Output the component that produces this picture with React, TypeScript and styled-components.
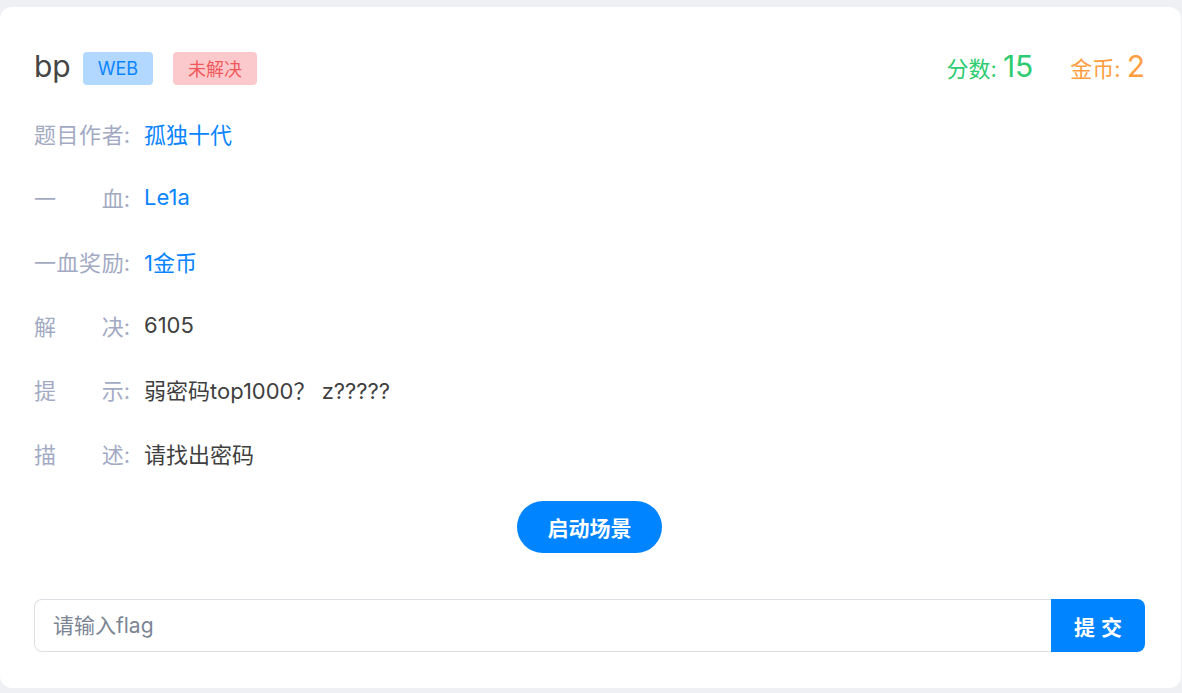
import React from "react";
import styled, { createGlobalStyle } from "styled-components";

const GlobalStyle = createGlobalStyle`
  html, body { margin: 0; padding: 0; background: #eef0f3; }
  body { font-family: Inter, "Noto Sans CJK SC", sans-serif; }
  * { box-sizing: border-box; }
`;

const Page = styled.div`
  padding: 7px 1px 5px 0;
`;

const Card = styled.div`
  background: #ffffff;
  border-radius: 12px;
  padding: 44px 36px 36px 34px;
  display: flex;
  flex-direction: column;
`;

const Header = styled.div`
  display: flex;
  align-items: center;
  height: 34px;
  margin-bottom: 16px;
`;

const Title = styled.span`
  font-size: 30px;
  color: #454545;
  margin-right: 12px;
  line-height: 1;
  margin-top: -4px;
`;

const Badge = styled.span<{ $bg: string; $fg: string }>`
  display: inline-flex;
  align-items: center;
  justify-content: center;
  height: 33px;
  padding: 0 15px;
  border-radius: 4px;
  background: ${(p) => p.$bg};
  color: ${(p) => p.$fg};
  font-size: 18px;
  margin-right: 20px;
`;

const Spacer = styled.div`
  flex: 1;
`;

const Stat = styled.span<{ $color: string }>`
  color: ${(p) => p.$color};
  font-size: 22px;
  display: inline-flex;
  align-items: baseline;
  margin-left: 37px;
  margin-top: -4px;
`;

const StatNum = styled.span`
  font-size: 30px;
  margin-left: 6px;
`;

const Row = styled.div`
  display: flex;
  align-items: center;
  height: 64px;
  font-size: 22px;
`;

const Label = styled.span`
  width: 96px;
  color: #a3aac3;
  display: flex;
  justify-content: space-between;
  margin-right: 14px;
`;

const Value = styled.span<{ $blue?: boolean }>`
  color: ${(p) => (p.$blue ? "#0a84ff" : "#3f3f3f")};
`;

const Center = styled.div`
  display: flex;
  justify-content: center;
  margin-top: 16px;
  margin-bottom: 46px;
`;

const StartButton = styled.button`
  height: 52px;
  width: 145px;
  border: none;
  border-radius: 26px;
  background: #0084ff;
  color: #fff;
  font-family: inherit;
  font-size: 21px;
  font-weight: 700;
  cursor: pointer;
`;

const InputGroup = styled.div`
  display: flex;
  height: 53px;
`;

const FlagInput = styled.input`
  flex: 1;
  border: 1px solid #dcdfe3;
  border-right: none;
  border-radius: 8px 0 0 8px;
  padding: 0 18px;
  font-family: inherit;
  font-size: 21px;
  color: #333;
  outline: none;
  &::placeholder { color: #7c8594; }
`;

const SubmitButton = styled.button`
  width: 94px;
  border: none;
  border-radius: 0 8px 8px 0;
  background: #0084ff;
  color: #fff;
  font-family: inherit;
  font-size: 21px;
  font-weight: 700;
  letter-spacing: 6px;
  padding-left: 12px;
`;

const rows: { label: string[]; value: string; blue?: boolean }[] = [
  { label: ["题", "目", "作", "者:"], value: "孤独十代", blue: true },
  { label: ["一", "血:"], value: "Le1a", blue: true },
  { label: ["一", "血", "奖", "励:"], value: "1金币", blue: true },
  { label: ["解", "决:"], value: "6105" },
  { label: ["提", "示:"], value: "弱密码top1000？ z?????" },
  { label: ["描", "述:"], value: "请找出密码" },
];

export default function App() {
  return (
    <>
      <GlobalStyle />
      <Page>
        <Card>
          <Header>
            <Title>bp</Title>
            <Badge $bg="#b3d8ff" $fg="#0a84ff">WEB</Badge>
            <Badge $bg="#fbc9cb" $fg="#f0595c">未解决</Badge>
            <Spacer />
            <Stat $color="#2ecc71">分数:<StatNum>15</StatNum></Stat>
            <Stat $color="#ff9f43">金币:<StatNum>2</StatNum></Stat>
          </Header>
          {rows.map((r, i) => (
            <Row key={i}>
              <Label>
                {r.label.map((c, j) => (
                  <span key={j}>{c}</span>
                ))}
              </Label>
              <Value $blue={r.blue}>{r.value}</Value>
            </Row>
          ))}
          <Center>
            <StartButton>启动场景</StartButton>
          </Center>
          <InputGroup>
            <FlagInput placeholder="请输入flag" />
            <SubmitButton>提交</SubmitButton>
          </InputGroup>
        </Card>
      </Page>
    </>
  );
}
